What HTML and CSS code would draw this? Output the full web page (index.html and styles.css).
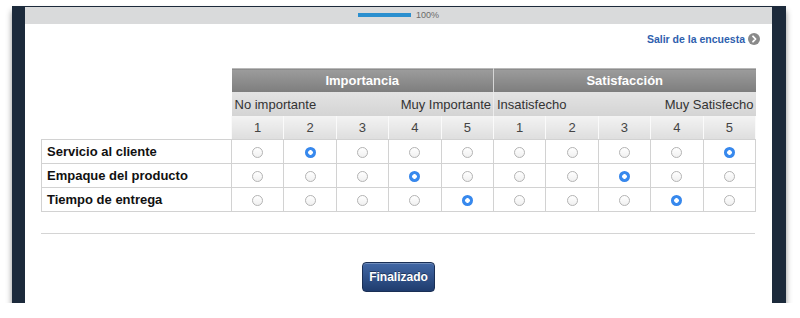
FILE: index.html
```html
<!DOCTYPE html>
<html lang="es">
<head>
<meta charset="utf-8">
<title>Encuesta</title>
<link rel="stylesheet" href="styles.css">
</head>
<body>
<div class="frame">
  <div class="page">
    <div class="topbar">
      <div class="progress"></div>
      <span class="progress-label">100%</span>
    </div>
    <div class="exit-row">
      <a class="exit" href="#">Salir de la encuesta</a>
      <span class="exit-icon"><svg width="12" height="12" viewBox="0 0 12 12"><circle cx="6" cy="6" r="6" fill="#8a8a8a"/><path d="M5 3.3 L7.6 6 L5 8.7" fill="none" stroke="#fff" stroke-width="1.8" stroke-linecap="round" stroke-linejoin="round"/></svg></span>
    </div>
    <div class="main">
      <table class="matrix">
        <colgroup>
          <col class="c-label">
          <col span="10" class="c-opt">
        </colgroup>
        <thead>
          <tr class="group-row">
            <th class="blank"></th>
            <th colspan="5" class="group g-first">Importancia</th>
            <th colspan="5" class="group">Satisfacción</th>
          </tr>
          <tr class="scale-row">
            <th class="blank"></th>
            <th colspan="5" class="scale g-first"><span>No importante</span><span>Muy Importante</span></th>
            <th colspan="5" class="scale"><span>Insatisfecho</span><span>Muy Satisfecho</span></th>
          </tr>
          <tr class="num-row">
            <th class="blank"></th>
            <th>1</th><th>2</th><th>3</th><th>4</th><th>5</th>
            <th>1</th><th>2</th><th>3</th><th>4</th><th>5</th>
          </tr>
        </thead>
        <tbody>
          <tr>
            <td class="label">Servicio al cliente</td>
            <td><span class="radio"></span></td><td><span class="radio on"></span></td><td><span class="radio"></span></td><td><span class="radio"></span></td><td><span class="radio"></span></td>
            <td><span class="radio"></span></td><td><span class="radio"></span></td><td><span class="radio"></span></td><td><span class="radio"></span></td><td><span class="radio on"></span></td>
          </tr>
          <tr>
            <td class="label">Empaque del producto</td>
            <td><span class="radio"></span></td><td><span class="radio"></span></td><td><span class="radio"></span></td><td><span class="radio on"></span></td><td><span class="radio"></span></td>
            <td><span class="radio"></span></td><td><span class="radio"></span></td><td><span class="radio on"></span></td><td><span class="radio"></span></td><td><span class="radio"></span></td>
          </tr>
          <tr>
            <td class="label">Tiempo de entrega</td>
            <td><span class="radio"></span></td><td><span class="radio"></span></td><td><span class="radio"></span></td><td><span class="radio"></span></td><td><span class="radio on"></span></td>
            <td><span class="radio"></span></td><td><span class="radio"></span></td><td><span class="radio"></span></td><td><span class="radio on"></span></td><td><span class="radio"></span></td>
          </tr>
        </tbody>
      </table>
      <div class="divider"></div>
      <div class="actions">
        <button class="finish" type="button">Finalizado</button>
      </div>
    </div>
  </div>
</div>
</body>
</html>
```

FILE: styles.css
```css
html, body {
  margin: 0;
  padding: 0;
  background: #ffffff;
}
body {
  font-family: "Liberation Sans", Arial, sans-serif;
  color: #222;
}
.frame {
  margin: 6px 0 0 12px;
  width: 747px;
  padding: 1px 14px 0 13px;
  background: #1c2a3b;
  box-shadow: 0 5px 6px rgba(0, 0, 0, 0.45);
}
.page {
  background: #ffffff;
  height: 296px;
  display: flex;
  flex-direction: column;
}
.topbar {
  height: 17px;
  background: #d9dadb;
  display: flex;
  align-items: center;
  justify-content: center;
  gap: 5px;
}
.progress {
  width: 53px;
  height: 4px;
  background: #2b8fcf;
  margin-top: -1px;
}
.progress-label {
  font-size: 9px;
  color: #6a6a6a;
  line-height: 10px;
  margin-top: -1px;
}
.exit-row {
  display: flex;
  justify-content: flex-end;
  align-items: center;
  gap: 3px;
  padding-right: 12px;
  margin-top: 8px;
  height: 14px;
}
.exit {
  font-size: 10.5px;
  font-weight: bold;
  color: #2f5fae;
  text-decoration: none;
}
.exit-icon {
  display: flex;
  width: 12px;
  height: 12px;
}
.main {
  padding: 0 17px 0 16px;
  margin-top: 22px;
  display: flex;
  flex-direction: column;
}
.matrix {
  width: 714px;
  border-collapse: collapse;
  table-layout: fixed;
  font-size: 13px;
}
.c-label { width: 190px; }
.c-opt { width: 52.4px; }
.matrix th, .matrix td {
  padding: 0;
  text-align: center;
  vertical-align: middle;
}
.matrix th.blank {
  background: transparent;
  border: none;
}
.group-row th.group {
  height: 23px;
  background: linear-gradient(#9c9c9c, #7d7d7d);
  color: #ffffff;
  font-weight: bold;
  font-size: 13px;
  border-top: 1px solid #b8b8b8;
}
.group-row th.g-first {
  border-right: 1px solid #d6d6d6;
}
.scale-row th.scale {
  height: 24px;
  background: linear-gradient(#e3e3e3, #d4d4d4);
  font-weight: normal;
  color: #333;
  font-size: 13px;
  padding: 0 2px 0 3px;
}
.scale-row th.scale span:first-child { float: left; }
.scale-row th.scale span:last-child { float: right; }
.scale-row th.g-first {
  border-right: 1px solid #ececec;
}
.num-row th {
  height: 23px;
  background: linear-gradient(#f3f3f3, #dedede);
  font-weight: normal;
  color: #444;
  font-size: 13px;
  border-left: 1px solid #fafafa;
  border-right: 1px solid #fafafa;
  border-bottom: 1px solid #d2d2d2;
}
.matrix tbody td {
  height: 23px;
  border: 1px solid #d2d2d2;
  background: #ffffff;
}
.matrix tbody td.label {
  text-align: left;
  font-weight: bold;
  font-size: 13px;
  color: #111;
  padding-left: 5px;
}
.radio {
  display: inline-block;
  width: 11px;
  height: 11px;
  box-sizing: border-box;
  border-radius: 50%;
  border: 1px solid #b4b4b4;
  background: linear-gradient(#ffffff, #f0f0f0);
  vertical-align: middle;
}
.radio.on {
  border: none;
  background: radial-gradient(circle, #ffffff 0, #ffffff 2px, #3a8cf0 2.6px, #2f7fe6 100%);
}
.divider {
  height: 1px;
  background: #d4d4d4;
  margin-top: 21px;
}
.actions {
  display: flex;
  justify-content: center;
  margin-top: 28px;
}
.finish {
  width: 73px;
  height: 30px;
  border: 1px solid #1a2f55;
  border-radius: 4px;
  background: linear-gradient(#4268a6, #1f3c6e);
  color: #ffffff;
  font-family: "Liberation Sans", Arial, sans-serif;
  font-weight: bold;
  font-size: 12px;
  text-shadow: 0 -1px 0 rgba(0, 0, 0, 0.4);
  box-shadow: inset 0 1px 0 rgba(255, 255, 255, 0.25);
  padding: 0;
  margin-left: 1px;
}
```
